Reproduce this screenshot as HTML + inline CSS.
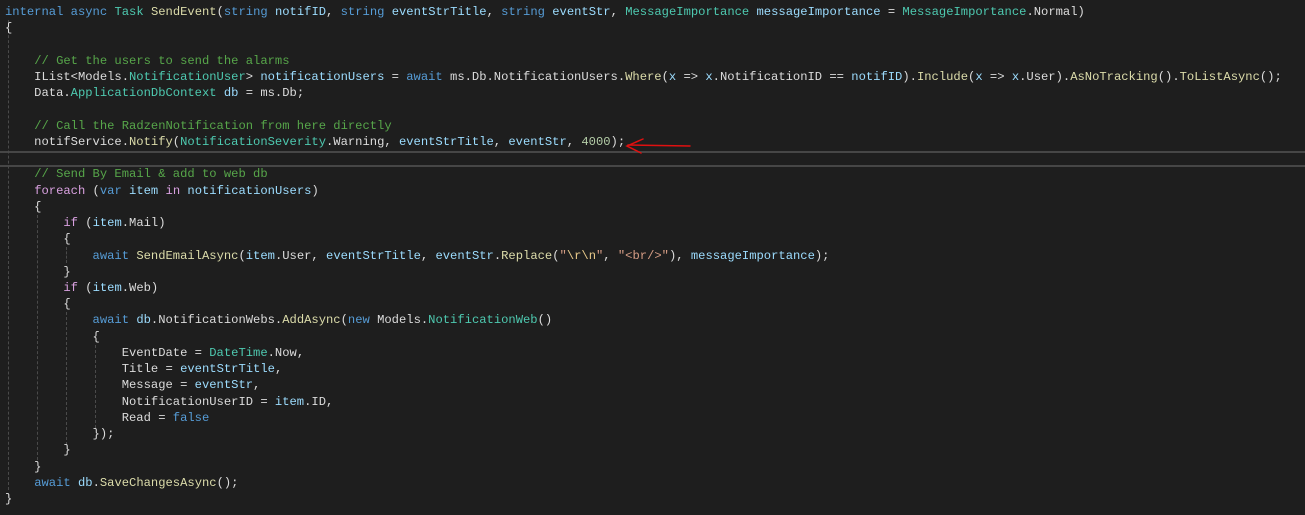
<!DOCTYPE html>
<html><head><meta charset="utf-8"><style>
body{margin:0;width:1305px;height:515px;background:#1e1e1e;overflow:hidden;position:relative;font-family:"Liberation Mono",monospace;font-size:12.17px;color:#dcdcdc}
.code{position:absolute;left:5px;top:4px;white-space:pre;line-height:16.23px}
.k{color:#569cd6}.t{color:#4ec9b0}.m{color:#dcdcaa}.v{color:#9cdcfe}.c{color:#57a64a}.s{color:#d69d85}.e{color:#e8c98a}.n{color:#b5cea8}.p{color:#d8a0df}
.g{position:absolute;border-left:1px dashed #4a4a4a;width:0}
.hl{position:absolute;left:0;right:0;top:151px;height:12px;border-top:2px solid #464646;border-bottom:2px solid #464646}
.ref{position:absolute;left:5px;top:-8px;font-family:"Liberation Sans",sans-serif;font-size:10px;color:#999}
</style></head><body>
<div class="ref">3 references</div>
<div class="hl"></div>
<div class="g" style="left:8px;top:20px;height:470px"></div>
<div class="g" style="left:37px;top:215px;height:245px"></div>
<div class="g" style="left:66px;top:247px;height:16px"></div>
<div class="g" style="left:66px;top:312px;height:133px"></div>
<div class="g" style="left:95px;top:345px;height:83px"></div>
<div class="code"><span class="k">internal</span> <span class="k">async</span> <span class="t">Task</span> <span class="m">SendEvent</span>(<span class="k">string</span> <span class="v">notifID</span>, <span class="k">string</span> <span class="v">eventStrTitle</span>, <span class="k">string</span> <span class="v">eventStr</span>, <span class="t">MessageImportance</span> <span class="v">messageImportance</span> = <span class="t">MessageImportance</span>.Normal)
{

    <span class="c">// Get the users to send the alarms</span>
    IList&lt;Models.<span class="t">NotificationUser</span>&gt; <span class="v">notificationUsers</span> = <span class="k">await</span> ms.Db.NotificationUsers.<span class="m">Where</span>(<span class="v">x</span> =&gt; <span class="v">x</span>.NotificationID == <span class="v">notifID</span>).<span class="m">Include</span>(<span class="v">x</span> =&gt; <span class="v">x</span>.User).<span class="m">AsNoTracking</span>().<span class="m">ToListAsync</span>();
    Data.<span class="t">ApplicationDbContext</span> <span class="v">db</span> = ms.Db;

    <span class="c">// Call the RadzenNotification from here directly</span>
    notifService.<span class="m">Notify</span>(<span class="t">NotificationSeverity</span>.Warning, <span class="v">eventStrTitle</span>, <span class="v">eventStr</span>, <span class="n">4000</span>);

    <span class="c">// Send By Email &amp; add to web db</span>
    <span class="p">foreach</span> (<span class="k">var</span> <span class="v">item</span> <span class="p">in</span> <span class="v">notificationUsers</span>)
    {
        <span class="p">if</span> (<span class="v">item</span>.Mail)
        {
            <span class="k">await</span> <span class="m">SendEmailAsync</span>(<span class="v">item</span>.User, <span class="v">eventStrTitle</span>, <span class="v">eventStr</span>.<span class="m">Replace</span>(<span class="s">"</span><span class="e">\r\n</span><span class="s">"</span>, <span class="s">"&lt;br/&gt;"</span>), <span class="v">messageImportance</span>);
        }
        <span class="p">if</span> (<span class="v">item</span>.Web)
        {
            <span class="k">await</span> <span class="v">db</span>.NotificationWebs.<span class="m">AddAsync</span>(<span class="k">new</span> Models.<span class="t">NotificationWeb</span>()
            {
                EventDate = <span class="t">DateTime</span>.Now,
                Title = <span class="v">eventStrTitle</span>,
                Message = <span class="v">eventStr</span>,
                NotificationUserID = <span class="v">item</span>.ID,
                Read = <span class="k">false</span>
            });
        }
    }
    <span class="k">await</span> <span class="v">db</span>.<span class="m">SaveChangesAsync</span>();
}</div>
<svg style="position:absolute;left:0;top:0" width="1305" height="515"><g fill="none" stroke="#e01010" stroke-width="1.5" stroke-linecap="round"><path d="M628 145 L690 146"/><path d="M643 139 L627 146 L641 153"/></g></svg>
</body></html>
